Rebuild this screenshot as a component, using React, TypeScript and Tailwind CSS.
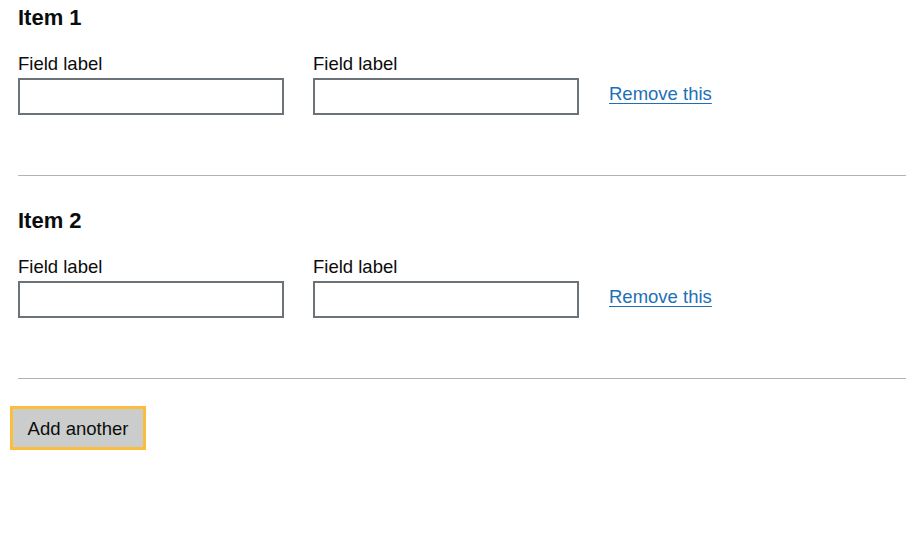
import React from 'react'

function Field({ label }: { label: string }) {
  return (
    <div className="flex flex-col">
      <label className="text-[18.5px] leading-[25px] mb-[2px]">{label}</label>
      <input
        type="text"
        className="w-[266px] h-[37px] border-2 border-[#6b7378] bg-white px-2 text-[19px] outline-none"
      />
    </div>
  )
}

function Item({ n, first }: { n: number; first?: boolean }) {
  return (
    <div className={first ? 'pt-[5px]' : 'pt-[32px]'}>
      <h2 className="text-[22px] leading-[25px] font-bold">Item {n}</h2>
      <div className="flex items-end gap-[29px] mt-[21px]">
        <Field label="Field label" />
        <Field label="Field label" />
        <a href="#" className="text-[18.5px] leading-[25px] text-[#1d70b8] underline underline-offset-[3px] mb-[9px] ml-[1px]">
          Remove this
        </a>
      </div>
      <div className="h-[60px]" />
      <hr className="border-0 border-t border-[#b1b4b6]" />
    </div>
  )
}

export default function App() {
  return (
    <div
      className="min-h-screen bg-white text-[#0b0c0c] pl-[18px] pr-[5px]"
      style={{ fontFamily: '"Liberation Sans", Arial, sans-serif' }}
    >
      <Item n={1} first />
      <Item n={2} />
      <button className="mt-[27px] -ml-[8px] w-[136px] h-[44px] border-[3px] border-[#fcbd3f] bg-[#cbcdcd] text-[18.5px] leading-[25px] text-[#0b0c0c]">
        Add another
      </button>
    </div>
  )
}
